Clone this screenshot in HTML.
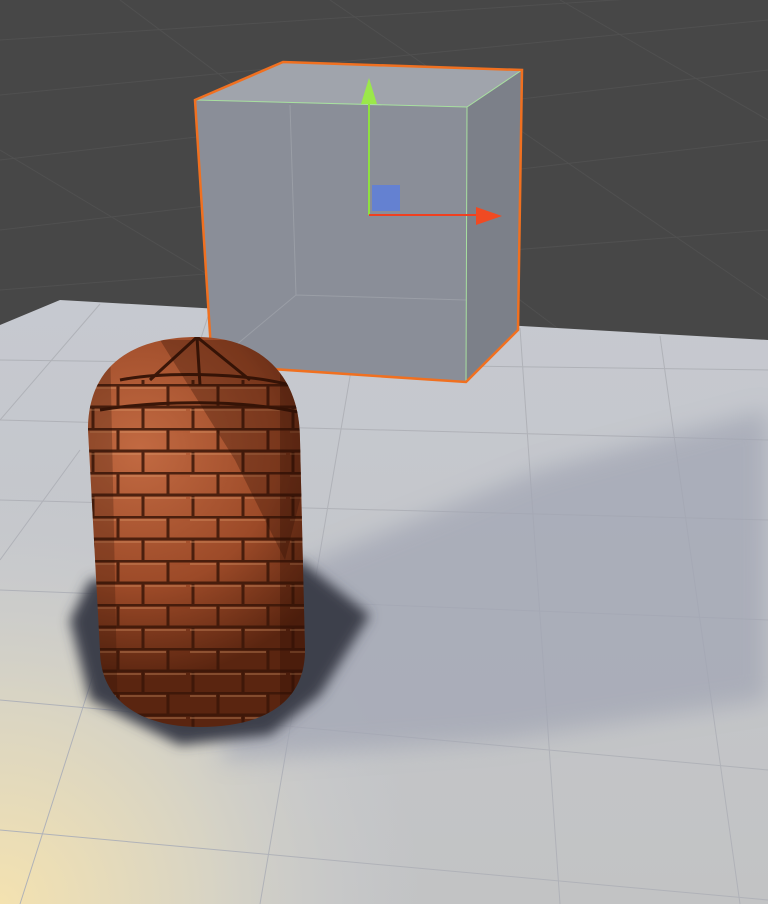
<!DOCTYPE html>
<html><head><meta charset="utf-8"><style>html,body{margin:0;padding:0;background:#474747;}svg{display:block}</style></head>
<body>
<svg width="768" height="904" viewBox="0 0 768 904" xmlns="http://www.w3.org/2000/svg">
<defs>
<radialGradient id="glow" cx="0" cy="904" r="420" gradientUnits="userSpaceOnUse">
<stop offset="0" stop-color="#f4e2b0"/><stop offset="0.5" stop-color="#d8d4c4"/><stop offset="1" stop-color="#c9ccd3" stop-opacity="0"/>
</radialGradient>
<linearGradient id="plane" x1="0" y1="300" x2="0" y2="904" gradientUnits="userSpaceOnUse">
<stop offset="0" stop-color="#c6c9d0"/><stop offset="1" stop-color="#c2c3c4"/>
</linearGradient>
<radialGradient id="cap" cx="140" cy="450" r="230" gradientUnits="userSpaceOnUse">
<stop offset="0" stop-color="#c26a42"/><stop offset="0.6" stop-color="#9c4a28"/><stop offset="1" stop-color="#5a2510"/>
</radialGradient>
<pattern id="brick" x="88" y="340" width="100" height="44" patternUnits="userSpaceOnUse">
<path d="M0 1H100M0 23H100M30 1V23M80 1V23M5 23V44M55 23V44" stroke="#3a1608" stroke-width="3" fill="none"/>
<path d="M2 4H28M32 4H78M2 26H53M57 26H98" stroke="#e0a070" stroke-width="1.5" opacity="0.5" fill="none"/>
</pattern>
<clipPath id="capclip"><path d="M88 430 C88 360 140 337 197 337 C255 337 300 370 300 440 L305 650 C305 705 260 727 200 727 C140 727 100 700 100 650 Z"/></clipPath>
<filter id="blur"><feGaussianBlur stdDeviation="6"/></filter>
<filter id="blur2"><feGaussianBlur stdDeviation="12"/></filter>
</defs>
<rect width="768" height="904" fill="#474747"/>
<g stroke="#505050" stroke-width="1">
<path d="M0 40L768 -10M0 95L768 20M0 160L768 70M0 230L768 140M0 290L768 230M0 150L250 300M120 0L560 330M330 0L768 300M560 0L768 120"/>
</g>
<path d="M0 325 L60 300 L768 340 L768 904 L0 904 Z" fill="url(#plane)"/>
<path d="M0 325 L60 300 L768 340 L768 904 L0 904 Z" fill="url(#glow)"/>
<g stroke="#b0b2b8" stroke-width="1" fill="none">
<path d="M0 360L768 370M0 420L768 440M0 500L768 520M0 590L768 620M0 700L768 770M0 830L768 900"/>
<path d="M100 304L0 420M210 310L20 904M360 318L260 904M520 328L560 904M660 336L740 904M0 560L80 450"/>
</g>
<!-- cube shadow -->
<path d="M290 570 L540 470 L768 410 L768 700 L500 740 L220 760 Z" fill="#a2a6b4" opacity="0.75" filter="url(#blur2)"/>
<!-- capsule shadow -->
<path d="M90 580 L300 560 L370 615 L320 695 L270 735 L180 745 L90 700 L70 620 Z" fill="#3d404c" filter="url(#blur)"/>
<!-- cube -->
<path d="M195 100 L467 107 L466 382 L212 365 Z" fill="#8a8e98"/>
<path d="M467 107 L522 70 L518 330 L466 382 Z" fill="#7c8089"/>
<path d="M195 100 L283 62 L522 70 L467 107 Z" fill="#a0a4ac"/>
<path d="M290 105 L296 295 L466 300 M296 295 L212 365" stroke="#9a9ea6" stroke-width="1" fill="none"/>
<path d="M195 100 L467 107 L522 70 M467 107 L466 382" stroke="#a8e0a0" stroke-width="1" fill="none"/>
<path d="M195 100 L283 62 L522 70 L518 330 L466 382 L212 365 Z" stroke="#f07020" stroke-width="2.5" fill="none"/>
<rect x="372" y="185" width="28" height="26" fill="#5a7ee0" opacity="0.8"/>
<line x1="369" y1="215" x2="369" y2="100" stroke="#8fe040" stroke-width="2"/>
<path d="M369 78 L361 104 L377 104 Z" fill="#9be84a"/>
<line x1="369" y1="215" x2="478" y2="215" stroke="#f04020" stroke-width="2"/>
<path d="M502 216 L476 207 L476 225 Z" fill="#f04a22"/>
<!-- capsule -->
<path d="M88 430 C88 360 140 337 197 337 C255 337 300 370 300 440 L305 650 C305 705 260 727 200 727 C140 727 100 700 100 650 Z" fill="url(#cap)"/>
<g clip-path="url(#capclip)">
<rect x="80" y="380" width="240" height="360" fill="url(#brick)" opacity="0.85"/>
<path d="M197 337 L150 380 M197 337 L200 385 M197 337 L250 380 M120 380 C160 372 240 372 290 385 M100 410 C160 400 240 400 298 412" stroke="#3a1608" stroke-width="3" fill="none"/>
<path d="M160 340 L235 460 L285 560 L305 480 L300 340 Z" fill="#2a0e04" opacity="0.3"/>
<path d="M88 340 L110 340 L118 727 L88 727 Z" fill="#2a0e04" opacity="0.25"/>
<path d="M280 340 L310 340 L310 727 L280 727 Z" fill="#2a0e04" opacity="0.3"/>
</g>
</svg>
</body></html>
